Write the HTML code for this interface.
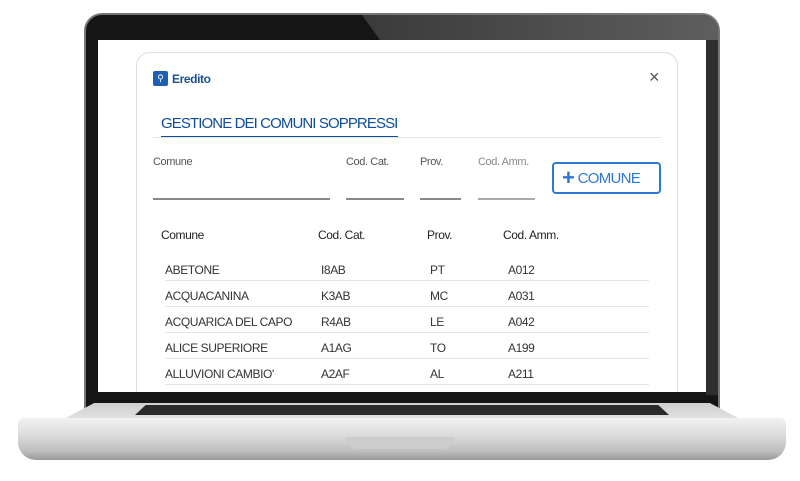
<!DOCTYPE html>
<html><head><meta charset="utf-8"><style>
*{margin:0;padding:0;box-sizing:border-box}
body{width:800px;height:481px;background:#fff;position:relative;overflow:hidden;font-family:"Liberation Sans",sans-serif}
.bezel{position:absolute;left:84px;top:13px;width:636px;height:406px;background:#151515;border-radius:18px 18px 4px 4px;border:2px solid #777}
.glare{position:absolute;left:362px;top:15px;width:356px;height:25px;background:linear-gradient(90deg,#3a3a3a,#5e5e5e);clip-path:polygon(0 0,100% 0,100% 100%,18px 100%);border-radius:0 16px 0 0}
.rside{position:absolute;left:706px;top:40px;width:12px;height:355px;background:#2e2e2e}
.screen{position:absolute;left:98px;top:40px;width:608px;height:352px;background:#fff;overflow:hidden}
.card{position:absolute;left:38px;top:12px;width:542px;height:400px;border:1px solid #ddd;border-radius:14px;background:#fff}
.t{position:absolute;white-space:nowrap}
.base{position:absolute;left:18px;top:418px;width:768px;height:42px;background:linear-gradient(#f2f2f2,#dcdcdc 40%,#bdbdbd 80%,#999);border-radius:6px 6px 18px 18px}
.deck{position:absolute;left:60px;top:403px;width:684px;height:18px;background:linear-gradient(#cfcfcf,#e4e4e4);clip-path:polygon(5% 0,95% 0,100% 100%,0 100%)}
.kb{position:absolute;left:135px;top:405px;width:534px;height:10px;background:#2a2a2a;clip-path:polygon(2% 0,98% 0,100% 100%,0 100%)}
.notch{position:absolute;left:347px;top:437px;width:106px;height:12px;background:#ccc;border-radius:0 0 10px 10px}
.row{position:absolute;left:28px;width:484px;height:1px;background:#e4e4e4}
.c{position:absolute;font-size:12px;color:#333;letter-spacing:-0.4px;white-space:nowrap}
.lb{letter-spacing:-0.4px}
</style></head><body>
<div class="bezel"></div>
<div class="glare"></div>
<div class="rside"></div>
<div class="screen">
 <div class="card">
  <div class="t" style="left:16px;top:18px;width:15px;height:15px;background:#1d5fb0;border-radius:2px;color:#fff;font-size:9px;text-align:center;line-height:15px">⚲</div>
  <div class="t lb" style="left:35px;top:19px;font-size:12px;font-weight:bold;color:#1d4f91">Eredito</div>
  <div class="t" style="left:512px;top:14px;font-size:18px;color:#555">×</div>
  <div class="t" style="left:24px;top:62px;font-size:15px;color:#0e4d99;letter-spacing:-0.9px">GESTIONE DEI COMUNI SOPPRESSI</div>
  <div class="t" style="left:24px;top:83px;width:237px;height:2px;background:#0e4d99"></div>
  <div class="t" style="left:16px;top:84px;width:508px;height:1px;background:#e5e5e5"></div>
  <div class="t lb" style="left:16px;top:103px;font-size:11px;color:#555">Comune</div>
  <div class="t lb" style="left:209px;top:103px;font-size:11px;color:#555">Cod. Cat.</div>
  <div class="t lb" style="left:283px;top:103px;font-size:11px;color:#555">Prov.</div>
  <div class="t lb" style="left:341px;top:103px;font-size:11px;color:#888">Cod. Amm.</div>
  <div class="t" style="left:16px;top:145px;width:177px;height:2px;background:#888"></div>
  <div class="t" style="left:209px;top:145px;width:58px;height:2px;background:#888"></div>
  <div class="t" style="left:283px;top:145px;width:41px;height:2px;background:#888"></div>
  <div class="t" style="left:341px;top:145px;width:57px;height:2px;background:#aaa"></div>
  <div class="t" style="left:415px;top:109px;width:109px;height:32px;border:2px solid #2d7ad6;border-radius:4px;color:#2d7ad6;font-size:15px;line-height:28px;padding-left:8px;letter-spacing:-0.7px"><b style="font-size:22px;vertical-align:-2px">+</b> COMUNE</div>
  <div class="c" style="left:24px;top:175px;color:#222">Comune</div>
  <div class="c" style="left:181px;top:175px;color:#222">Cod. Cat.</div>
  <div class="c" style="left:290px;top:175px;color:#222">Prov.</div>
  <div class="c" style="left:366px;top:175px;color:#222">Cod. Amm.</div>
  <div class="c" style="left:28px;top:210px">ABETONE</div><div class="c" style="left:184px;top:210px">I8AB</div><div class="c" style="left:293px;top:210px">PT</div><div class="c" style="left:371px;top:210px">A012</div>
  <div class="row" style="top:227px"></div>
  <div class="c" style="left:28px;top:236px">ACQUACANINA</div><div class="c" style="left:184px;top:236px">K3AB</div><div class="c" style="left:293px;top:236px">MC</div><div class="c" style="left:371px;top:236px">A031</div>
  <div class="row" style="top:253px"></div>
  <div class="c" style="left:28px;top:262px">ACQUARICA DEL CAPO</div><div class="c" style="left:184px;top:262px">R4AB</div><div class="c" style="left:293px;top:262px">LE</div><div class="c" style="left:371px;top:262px">A042</div>
  <div class="row" style="top:279px"></div>
  <div class="c" style="left:28px;top:288px">ALICE SUPERIORE</div><div class="c" style="left:184px;top:288px">A1AG</div><div class="c" style="left:293px;top:288px">TO</div><div class="c" style="left:371px;top:288px">A199</div>
  <div class="row" style="top:305px"></div>
  <div class="c" style="left:28px;top:314px">ALLUVIONI CAMBIO'</div><div class="c" style="left:184px;top:314px">A2AF</div><div class="c" style="left:293px;top:314px">AL</div><div class="c" style="left:371px;top:314px">A211</div>
  <div class="row" style="top:331px"></div>
 </div>
</div>
<div class="deck"></div>
<div class="kb"></div>
<div class="base"></div>
<div class="notch"></div>
</body></html>
